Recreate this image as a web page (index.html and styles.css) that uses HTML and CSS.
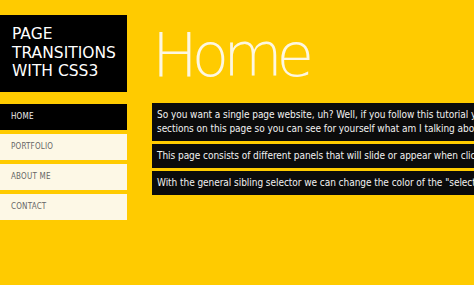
FILE: index.html
```html
<!DOCTYPE html>
<html lang="en">
<head>
<meta charset="UTF-8">
<title>Page Transitions with CSS3</title>
<link rel="stylesheet" href="styles.css">
</head>
<body>
<div class="wrapper">
    <div class="sidebar">
        <h1 class="title">PAGE<br>TRANSITIONS<br>WITH CSS3</h1>
        <ul class="nav">
            <li class="selected">Home</li>
            <li>Portfolio</li>
            <li>About me</li>
            <li>Contact</li>
        </ul>
    </div>
    <div class="main">
        <h2 class="heading">Home</h2>
        <p class="panel">So you want a single page website, uh? Well, if you follow this tutorial you will learn how to create one with CSS3 transitions. Click on the different<br>sections on this page so you can see for yourself what am I talking about.</p>
        <p class="panel">This page consists of different panels that will slide or appear when clicking on the menu items.</p>
        <p class="panel">With the general sibling selector we can change the color of the "selected" menu item.</p>
    </div>
</div>
</body>
</html>
```

FILE: styles.css
```css
html, body {
    margin: 0;
    padding: 0;
    overflow: hidden;
}
body {
    background-color: #ffcb00;
    font-family: "DejaVu Sans", sans-serif;
    width: 474px;
    height: 285px;
}
.wrapper {
    display: flex;
}
.sidebar {
    width: 127px;
    flex-shrink: 0;
    padding-top: 15px;
}
.title {
    margin: 0;
    height: 77px;
    box-sizing: border-box;
    background-color: #000;
    color: #fff;
    font-size: 15.5px;
    font-weight: normal;
    line-height: 18.5px;
    padding: 10px 0 0 12px;
}
.nav {
    list-style: none;
    margin: 12px 0 0 0;
    padding: 0;
    display: flex;
    flex-direction: column;
    gap: 4px;
}
.nav li {
    height: 26px;
    line-height: 26px;
    padding-left: 11px;
    background-color: #fdf8e6;
    color: #666;
    font-family: "DejaVu Sans Condensed", sans-serif;
    font-size: 8px;
    letter-spacing: 0.2px;
    text-transform: uppercase;
}
.nav li.selected {
    background-color: #000;
    color: #eee;
}
.main {
    margin-left: 25px;
    padding-top: 19px;
    flex-shrink: 0;
}
.heading {
    margin: 0 0 0 0;
    height: 84px;
    color: #fdf7e2;
    font-family: "DejaVu Sans", sans-serif;
    font-weight: 200;
    font-size: 61px;
    line-height: 72px;
    letter-spacing: -6px;
}
.panel {
    margin: 0 0 3px 0;
    width: 600px;
    background-color: #0b0b0b;
    color: #f2f2f2;
    font-family: "DejaVu Sans Condensed", sans-serif;
    font-size: 10px;
    letter-spacing: -0.05px;
    line-height: 14px;
    padding: 5px 5px;
    white-space: nowrap;
}
```
